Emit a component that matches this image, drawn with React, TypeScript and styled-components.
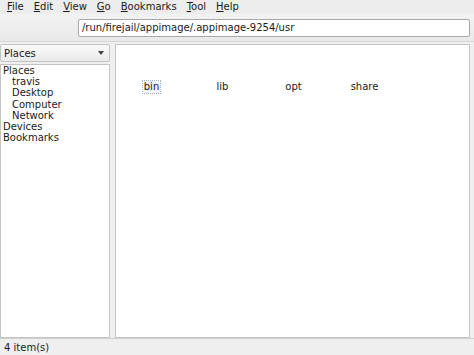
import styled, { createGlobalStyle } from 'styled-components';

const GlobalStyle = createGlobalStyle`
  html, body {
    margin: 0;
    padding: 0;
    width: 474px;
    height: 355px;
    overflow: hidden;
    background: #efefef;
  }

  body {
    font-family: 'DejaVu Sans', sans-serif;
    font-size: 10px;
    color: #1a1a1a;
  }

  #root {
    height: 100%;
  }
`;

const Window = styled.div`
  height: 355px;
  display: flex;
  flex-direction: column;
  background: #efefef;
`;

const MenuBar = styled.div`
  height: 14px;
  display: flex;
  align-items: center;
  gap: 10px;
  padding: 0 0 0 7px;
  background: #ededed;
`;

const MenuItem = styled.span`
  line-height: 14px;

  & u {
    text-decoration: underline;
    text-underline-offset: 1px;
  }
`;

const Toolbar = styled.div`
  height: 27px;
  display: flex;
  align-items: center;
  padding: 0 4px 0 78px;
  background: linear-gradient(#f2f2f2, #e9e9e9);
  border-bottom: 1px solid #d6d6d6;
`;

const PathEntry = styled.input`
  flex: 1;
  height: 18px;
  box-sizing: border-box;
  margin: 0;
  padding: 0 3px;
  border: 1px solid #a8a8a8;
  border-radius: 2px;
  background: #fff;
  font: inherit;
  color: #1a1a1a;
  outline: none;
`;

const Body = styled.div`
  flex: 1;
  display: flex;
  padding: 2px 4px 0 0;
  gap: 5px;
  min-height: 0;
`;

const SidePane = styled.div`
  width: 110px;
  display: flex;
  flex-direction: column;
  gap: 2px;
`;

const Combo = styled.div`
  height: 16px;
  display: flex;
  align-items: center;
  justify-content: space-between;
  padding: 0 5px 0 3px;
  border: 1px solid #c4c4c4;
  border-radius: 2px;
  background: linear-gradient(#fafafa, #eaeaea);
`;

const Arrow = styled.span`
  width: 0;
  height: 0;
  border-left: 3px solid transparent;
  border-right: 3px solid transparent;
  border-top: 4px solid #444;
`;

const TreeView = styled.div`
  flex: 1;
  background: #fff;
  border: 1px solid #c4c4c4;
  padding: 0 0 0 2px;
`;

const TreeRow = styled.div<{ $depth: number }>`
  line-height: 11.2px;
  padding-left: ${(p) => p.$depth * 9}px;
`;

const FilePane = styled.div`
  flex: 1;
  background: #fff;
  border: 1px solid #c4c4c4;
  display: grid;
  grid-template-columns: repeat(4, 71px);
  grid-auto-rows: 60px;
  align-content: start;
  padding: 12px 0 0 0;
`;

const FileItem = styled.div`
  display: flex;
  align-items: center;
  justify-content: center;
  height: 60px;
`;

const FileLabel = styled.span<{ $selected?: boolean }>`
  padding: 0 1px;
  line-height: 12px;
  background: ${(p) => (p.$selected ? '#eef4f8' : 'transparent')};
  outline: ${(p) => (p.$selected ? '1px dotted #9fb7c9' : 'none')};
`;

const StatusBar = styled.div`
  height: 16px;
  display: flex;
  align-items: center;
  padding-left: 4px;
  background: #efefef;
  border-top: 1px solid #d0d0d0;
`;

const menus = [
  ['F', 'ile'],
  ['E', 'dit'],
  ['V', 'iew'],
  ['G', 'o'],
  ['B', 'ookmarks'],
  ['T', 'ool'],
  ['H', 'elp'],
];

const places = [
  { label: 'Places', depth: 0 },
  { label: 'travis', depth: 1 },
  { label: 'Desktop', depth: 1 },
  { label: 'Computer', depth: 1 },
  { label: 'Network', depth: 1 },
  { label: 'Devices', depth: 0 },
  { label: 'Bookmarks', depth: 0 },
];

const files = ['bin', 'lib', 'opt', 'share'];

function App() {
  return (
    <Window>
      <GlobalStyle />
      <MenuBar>
        {menus.map(([key, rest]) => (
          <MenuItem key={key}>
            <u>{key}</u>
            {rest}
          </MenuItem>
        ))}
      </MenuBar>
      <Toolbar>
        <PathEntry readOnly value="/run/firejail/appimage/.appimage-9254/usr" />
      </Toolbar>
      <Body>
        <SidePane>
          <Combo>
            Places
            <Arrow />
          </Combo>
          <TreeView>
            {places.map((p) => (
              <TreeRow key={p.label} $depth={p.depth}>
                {p.label}
              </TreeRow>
            ))}
          </TreeView>
        </SidePane>
        <FilePane>
          {files.map((name, i) => (
            <FileItem key={name}>
              <FileLabel $selected={i === 0}>{name}</FileLabel>
            </FileItem>
          ))}
        </FilePane>
      </Body>
      <StatusBar>4 item(s)</StatusBar>
    </Window>
  );
}

export default App;
